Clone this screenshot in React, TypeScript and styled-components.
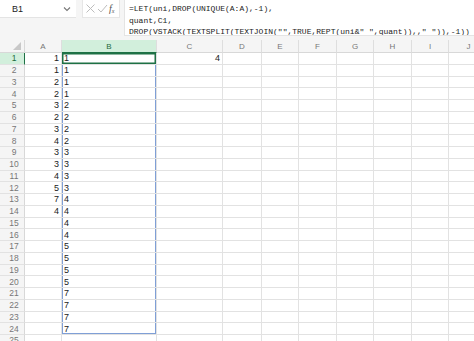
import React from 'react';
import styled, { createGlobalStyle } from 'styled-components';

const GlobalStyle = createGlobalStyle`
  html, body {
    margin: 0;
    padding: 0;
    background: #ffffff;
  }
  body {
    font-family: "Liberation Sans", Arial, sans-serif;
    overflow: hidden;
  }
`;

const colWidths = [25, 37, 95, 66, 39, 37, 38, 37, 38, 37, 40];
const letters = ['A', 'B', 'C', 'D', 'E', 'F', 'G', 'H', 'I', 'J'];

const colA = [1, 1, 2, 2, 3, 2, 3, 4, 3, 3, 4, 5, 7, 4];
const colB = [1, 1, 1, 1, 2, 2, 2, 2, 3, 3, 3, 3, 4, 4, 4, 4, 5, 5, 5, 5, 7, 7, 7, 7];
const ROWS = 25;

const formula = [
  '=LET(uni,DROP(UNIQUE(A:A),-1),',
  'quant,C1,',
  'DROP(VSTACK(TEXTSPLIT(TEXTJOIN("",TRUE,REPT(uni&" ",quant)),," ")),-1))',
];

export default function App() {
  return (
    <Page>
      <GlobalStyle />
      <Toolbar>
        <NameBox>
          <span>B1</span>
          <Chevron width="8" height="6" viewBox="0 0 8 6">
            <path d="M1 1.5 L4 4.5 L7 1.5" fill="none" stroke="#777" strokeWidth="1.1" />
          </Chevron>
        </NameBox>
        <Dots />
        <IconBox>
          <svg width="11" height="11" viewBox="0 0 11 11">
            <path d="M1.5 1.5 L9.5 9.5 M9.5 1.5 L1.5 9.5" stroke="#bdbdbd" strokeWidth="1" />
          </svg>
          <svg width="11" height="11" viewBox="0 0 11 11">
            <path d="M1 6 L4 9 L10 2" fill="none" stroke="#bdbdbd" strokeWidth="1" />
          </svg>
          <Fx>
            f<sub>x</sub>
          </Fx>
        </IconBox>
        <FormulaBox>
          {formula.map((line, i) => (
            <div key={i}>{line}</div>
          ))}
        </FormulaBox>
      </Toolbar>

      <Sheet>
        <Corner>
          <svg width="8" height="8" viewBox="0 0 8 8">
            <path d="M8 0 L8 8 L0 8 Z" fill="#c8c8c8" />
          </svg>
        </Corner>
        {letters.map((l) => (
          <ColHead key={l} $active={l === 'B'}>
            {l}
          </ColHead>
        ))}

        {Array.from({ length: ROWS }, (_, r) => {
          const row = r + 1;
          return (
            <React.Fragment key={row}>
              <RowHead $active={row === 1}>{row}</RowHead>
              <Cell $align="right">{colA[r] ?? ''}</Cell>
              <Cell
                $active={row === 1}
                $spill={row > 1 && row <= 24}
                $spillEnd={row === 24}
              >
                {colB[r] ?? ''}
              </Cell>
              <Cell $align="right">{row === 1 ? 4 : ''}</Cell>
              {letters.slice(3).map((l) => (
                <Cell key={l} />
              ))}
            </React.Fragment>
          );
        })}
      </Sheet>
    </Page>
  );
}

const Page = styled.div`
  width: 474px;
  height: 341px;
  overflow: hidden;
  background: #f5f5f5;
`;

const Toolbar = styled.div`
  display: flex;
  align-items: flex-start;
  height: 40px;
  background: #f5f5f5;
`;

const NameBox = styled.div`
  width: 76px;
  height: 18px;
  box-sizing: border-box;
  background: #ffffff;
  border-bottom: 1px solid #e4e4e4;
  display: flex;
  align-items: center;
  justify-content: space-between;
  padding: 0 5px 0 12px;
  font-size: 9px;
  color: #222;
`;

const Chevron = styled.svg`
  display: block;
`;

const Dots = styled.div`
  width: 6px;
  height: 18px;
`;

const IconBox = styled.div`
  width: 38px;
  height: 18px;
  box-sizing: border-box;
  background: #ffffff;
  border: 1px solid #e6e6e6;
  border-top: none;
  display: flex;
  align-items: center;
  gap: 1px;
  padding: 0 2px;
`;

const Fx = styled.span`
  font-family: "Liberation Serif", "Times New Roman", serif;
  font-style: italic;
  font-size: 10px;
  color: #555;
  line-height: 1;

  sub {
    font-size: 6px;
    vertical-align: -1px;
  }
`;

const FormulaBox = styled.div`
  flex: 1;
  margin-left: 4px;
  height: 36px;
  box-sizing: border-box;
  background: #ffffff;
  border-left: 1px solid #e4e4e4;
  border-bottom: 1px solid #e4e4e4;
  padding: 3px 0 0 4px;
  font-family: "Liberation Mono", "Courier New", monospace;
  font-size: 8px;
  line-height: 11.5px;
  color: #222;
  white-space: pre;
  overflow: hidden;
`;

const Sheet = styled.div`
  display: grid;
  grid-template-columns: ${colWidths.map((w) => `${w}px`).join(' ')};
  grid-template-rows: 13px repeat(${ROWS}, 11.75px);
  background: #ffffff;
`;

const Corner = styled.div`
  background: #f5f5f5;
  border-right: 1px solid #d8d8d8;
  border-bottom: 1px solid #d8d8d8;
  display: flex;
  align-items: flex-end;
  justify-content: flex-end;
  padding: 0 3px 2px 0;
  box-sizing: border-box;
`;

const ColHead = styled.div<{ $active?: boolean }>`
  box-sizing: border-box;
  background: ${(p) => (p.$active ? '#d2efdc' : '#f5f5f5')};
  border-right: 1px solid #dedede;
  border-bottom: 1px solid ${(p) => (p.$active ? '#1e7145' : '#d8d8d8')};
  color: ${(p) => (p.$active ? '#1e6b40' : '#777')};
  font-size: 8px;
  display: flex;
  align-items: center;
  justify-content: center;
`;

const RowHead = styled.div<{ $active?: boolean }>`
  box-sizing: border-box;
  background: ${(p) => (p.$active ? '#d2efdc' : '#f5f5f5')};
  border-right: 1px solid ${(p) => (p.$active ? '#1e7145' : '#d8d8d8')};
  border-bottom: 1px solid #e2e2e2;
  color: ${(p) => (p.$active ? '#1e6b40' : '#777')};
  font-size: 8.5px;
  display: flex;
  align-items: center;
  justify-content: center;
  padding-left: 4px;
`;

const Cell = styled.div<{
  $align?: 'left' | 'right';
  $active?: boolean;
  $spill?: boolean;
  $spillEnd?: boolean;
}>`
  box-sizing: border-box;
  border-right: 1px solid #e2e2e2;
  border-bottom: 1px solid #e2e2e2;
  font-size: 9px;
  color: #222;
  display: flex;
  align-items: center;
  justify-content: ${(p) => (p.$align === 'right' ? 'flex-end' : 'flex-start')};
  padding: 0 2px;
  box-shadow: ${(p) =>
    p.$active
      ? 'inset 0 0 0 1.5px #1e7145'
      : p.$spill
        ? `inset 1px 0 0 #7f9fd6, inset -1px 0 0 #7f9fd6${p.$spillEnd ? ', inset 0 -1px 0 #7f9fd6' : ''}`
        : 'none'};
`;
